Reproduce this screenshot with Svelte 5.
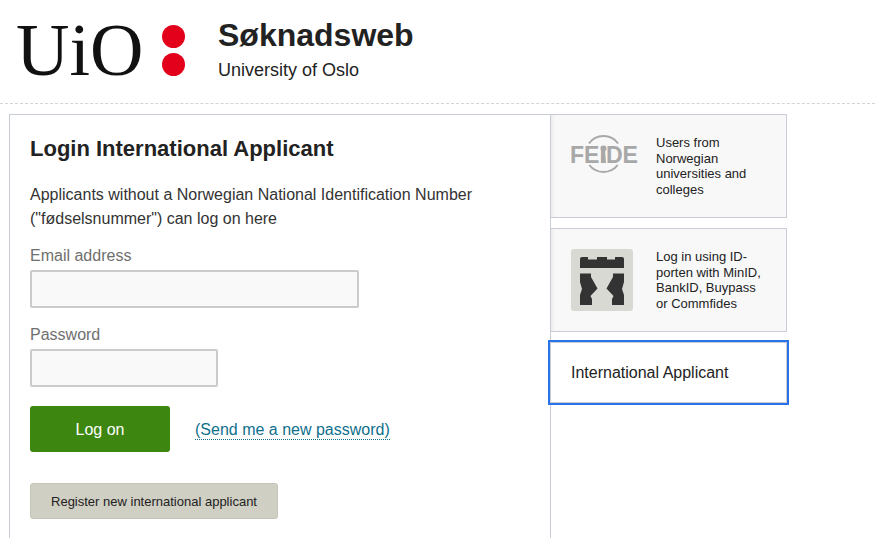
<script>
	const tabs = [
		{ id: 'feide', text: 'Users from Norwegian universities and colleges' },
		{ id: 'idporten', text: 'Log in using ID-porten with MinID, BankID, Buypass or Commfides' }
	];
</script>

<div class="page">
	<header>
		<div class="logo">
			<span class="uio">UiO</span>
			<div class="dots"><i></i><i></i></div>
		</div>
		<div class="titles">
			<h1>Søknadsweb</h1>
			<p>University of Oslo</p>
		</div>
	</header>

	<main>
		<section class="panel">
			<h2>Login International Applicant</h2>
			<p class="intro">
				Applicants without a Norwegian National Identification Number ("fødselsnummer") can log on here
			</p>
			<label for="email">Email address</label>
			<input id="email" class="email" type="text" />
			<label for="password">Password</label>
			<input id="password" class="password" type="password" />
			<div class="actions">
				<button class="primary">Log on</button>
				<a href="#new">(Send me a new password)</a>
			</div>
			<button class="secondary">Register new international applicant</button>
		</section>

		<nav>
			{#each tabs as tab}
				<div class="tab">
					<div class="icon">
						{#if tab.id === 'feide'}
							<svg class="feide-logo" width="70" height="42" viewBox="0 0 70 42">
								<path d="M17.9 10.5 A18 18 0 0 1 47.1 10.5 M18.3 32 A18 18 0 0 0 46.7 32" fill="none" stroke="#a8a8a8" stroke-width="2" />
								<text x="-1" y="30" textLength="68" lengthAdjust="spacingAndGlyphs" class="feide">FEIDE</text>
								<circle cx="32.5" cy="15.5" r="3" fill="#a8a8a8" />
								<path d="M31 17 L30 30 H35 L34 17 Z" fill="#a8a8a8" />
							</svg>
						{:else}
							<svg class="tower" width="62" height="62" viewBox="0 0 62 62">
								<rect width="62" height="62" rx="3" fill="#d8d9d3" />
								<path
									fill="#333"
									d="M9 10 Q9 8 11 8 H17 V10.5 H26 V8 H36 V10.5 H44 V8 H51 Q53 8 53 10 V19 H9 Z
									M9 24.5 H20 V28 L26.5 39.5 L19.5 47 L21 50 V56 H9 V46 L11 40 L9 33 Z
									M53 24.5 H42 V28 L35.5 39.5 L42.5 47 L41 50 V56 H53 V46 L51 40 L53 33 Z"
								/>
							</svg>
						{/if}
					</div>
					<span>{tab.text}</span>
				</div>
			{/each}
			<div class="tab active">International Applicant</div>
		</nav>
	</main>
</div>

<style>
	:global(body) {
		margin: 0;
		background: #fff;
		overflow: hidden;
	}

	.page {
		font-family: 'Liberation Sans', Arial, sans-serif;
		color: #222;
		height: 538px;
		overflow: hidden;
	}

	header {
		display: flex;
		align-items: flex-start;
		height: 103px;
		border-bottom: 1px dashed #d4d4d4;
	}

	.logo {
		display: flex;
		align-items: center;
		width: 218px;
		padding-left: 16px;
		box-sizing: border-box;
		height: 100px;
	}

	.uio {
		font-family: 'Liberation Serif', 'Times New Roman', serif;
		font-size: 74px;
		line-height: 100px;
		color: #111;
		width: 146px;
	}

	.dots {
		display: flex;
		flex-direction: column;
		gap: 5px;
	}

	.dots i {
		display: block;
		width: 23px;
		height: 23px;
		border-radius: 50%;
		background: #e2001a;
	}

	h1 {
		margin: 16px 0 0;
		font-size: 32px;
		line-height: 38px;
		font-weight: bold;
		color: #222;
	}

	.titles p {
		margin: 5px 0 0;
		font-size: 18px;
		line-height: 22px;
	}

	main {
		display: flex;
		align-items: flex-start;
		padding: 10px 0 0 9px;
	}

	.panel {
		width: 542px;
		height: 424px;
		box-sizing: border-box;
		border: 1px solid #c9cdd8;
		border-bottom: 0;
		padding: 20px 20px 0;
		display: flex;
		flex-direction: column;
		align-items: flex-start;
	}

	h2 {
		margin: 0;
		font-size: 22px;
		line-height: 28px;
		color: #222;
	}

	.intro {
		margin: 20px 0 0;
		font-size: 16px;
		line-height: 24px;
		color: #333;
	}

	label {
		font-size: 16px;
		line-height: 20px;
		color: #6f6f6f;
		margin-top: 17px;
	}

	label[for='email'] {
		margin-top: 15px;
	}

	input {
		display: block;
		box-sizing: border-box;
		margin: 4px 0 0;
		height: 38px;
		border: 2px solid #cbcbcb;
		border-radius: 2px;
		background: #f9f9f9;
		padding: 0 8px;
	}

	.email {
		width: 329px;
	}

	.password {
		width: 188px;
	}

	.actions {
		display: flex;
		align-items: center;
		gap: 25px;
		margin-top: 19px;
	}

	button {
		font-family: inherit;
		cursor: pointer;
		border-radius: 3px;
	}

	.primary {
		width: 140px;
		height: 46px;
		border: 0;
		background: #3d8610;
		color: #fff;
		font-size: 16px;
		padding: 2px 0 0;
	}

	a {
		font-size: 16px;
		color: #0f6f8c;
		text-decoration: none;
		border-bottom: 1px dotted #0f6f8c;
		margin-top: 2px;
	}

	.secondary {
		margin-top: 31px;
		width: 248px;
		height: 36px;
		border: 1px solid #c5c4b7;
		background: #d0cfc3;
		color: #222;
		font-size: 13px;
		padding: 0;
	}

	nav {
		width: 237px;
		display: flex;
		flex-direction: column;
		margin-left: -1px;
	}

	.tab {
		display: flex;
		align-items: center;
		box-sizing: border-box;
		height: 104px;
		margin-bottom: 10px;
		padding-left: 20px;
		border: 1px solid #c9cdd8;
		background: #f8f8f8;
		box-shadow: inset 4px 0 4px -3px #e4e4e8;
		font-size: 13px;
		line-height: 15.5px;
		color: #222;
	}

	.tab span {
		width: 108px;
	}

	.icon {
		width: 85px;
		flex: none;
		display: flex;
		align-items: center;
	}

	.feide-logo {
		margin-bottom: 25px;
	}

	.feide {
		font-size: 24px;
		font-weight: bold;
		fill: #a8a8a8;
	}

	.tower {
		display: block;
	}

	.tab.active {
		height: 61px;
		margin: 0;
		background: #fff;
		box-shadow: none;
		font-size: 16px;
		outline: 2px solid #2a72ea;
	}
</style>
